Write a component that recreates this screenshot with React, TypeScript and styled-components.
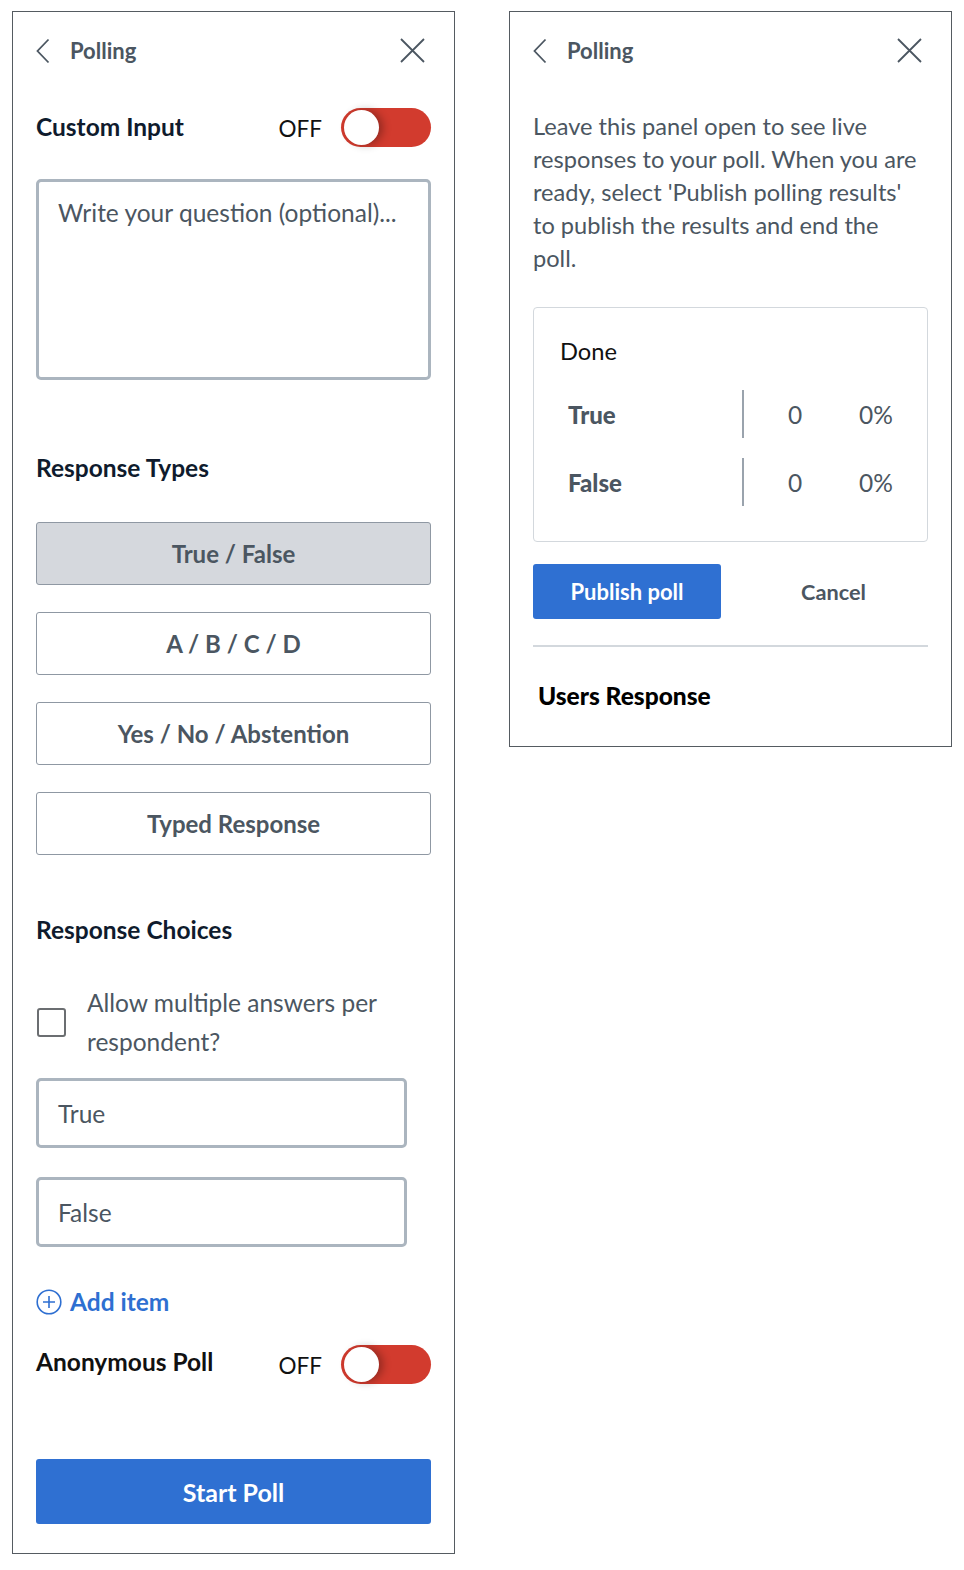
import React from "react";
import styled, { createGlobalStyle } from "styled-components";

const GlobalStyle = createGlobalStyle`
  * { box-sizing: border-box; }
  body {
    margin: 0;
    background: #fff;
    font-family: "Lato", "Liberation Sans", sans-serif;
  }
`;

const Page = styled.div`
  display: flex;
  align-items: flex-start;
  gap: 54px;
  padding: 11px 0 0 12px;
`;

const Panel = styled.div<{ $pad?: number }>`
  width: 443px;
  border: 1.5px solid #555b61;
  padding: 0 23px ${(p) => p.$pad ?? 0}px 23px;
  display: flex;
  flex-direction: column;
`;

const Header = styled.div`
  height: 77px;
  display: flex;
  align-items: center;
`;

const Title = styled.span`
  margin-left: 20px;
  font-size: 22px;
  font-weight: 700;
  color: #4b5661;
  flex: 1;
`;

const IconButton = styled.span`
  display: flex;
  align-items: center;
  justify-content: center;
`;

const ToggleRow = styled.div<{ $mt: number }>`
  margin-top: ${(p) => p.$mt}px;
  display: flex;
  align-items: center;
  height: 39px;
`;

const RowLabel = styled.span<{ $dark?: boolean }>`
  flex: 1;
  font-size: 24.5px;
  font-weight: 700;
  color: ${(p) => (p.$dark ? "#111" : "#0f1b2d")};
  margin-top: ${(p) => (p.$dark ? "-6px" : "-2px")};
`;

const OffText = styled.span`
  font-size: 22.5px;
  color: #111;
  margin-right: 19px;
  margin-top: 2px;
`;

const Switch = styled.span`
  width: 90px;
  height: 39px;
  border-radius: 20px;
  background: #d23b2e;
  position: relative;
  &::after {
    content: "";
    position: absolute;
    left: 3px;
    top: 2px;
    width: 35px;
    height: 35px;
    border-radius: 50%;
    background: #fff;
    box-shadow: 4px 0 8px rgba(0, 0, 0, 0.3);
  }
`;

const TextArea = styled.div`
  margin-top: 32px;
  height: 201px;
  border: 3px solid #abb5bf;
  border-radius: 5px;
  padding: 16px 19px;
  font-size: 24.5px;
  color: #4b5661;
`;

const SectionTitle = styled.div<{ $mt: number }>`
  margin-top: ${(p) => p.$mt}px;
  font-size: 24.5px;
  line-height: 30px;
  font-weight: 700;
  color: #0f1b2d;
`;

const TypeList = styled.div`
  margin-top: 39px;
  display: flex;
  flex-direction: column;
  gap: 27px;
`;

const TypeButton = styled.div<{ $active?: boolean }>`
  height: 63px;
  border: 1.5px solid #8f98a3;
  border-radius: 3px;
  background: ${(p) => (p.$active ? "#d5d8dd" : "#fff")};
  display: flex;
  align-items: center;
  justify-content: center;
  font-size: 24px;
  font-weight: 700;
  color: #4b5661;
`;

const CheckRow = styled.div`
  margin-top: 38px;
  display: flex;
  align-items: center;
  gap: 21px;
`;

const CheckBox = styled.span`
  width: 29px;
  height: 29px;
  flex-shrink: 0;
  border: 2.5px solid #6b6e71;
  border-radius: 3px;
  margin-left: 1px;
`;

const CheckText = styled.span`
  font-size: 24.5px;
  line-height: 39px;
  color: #4b5661;
`;

const ChoiceInput = styled.div<{ $mt: number }>`
  margin-top: ${(p) => p.$mt}px;
  width: 371px;
  height: 70px;
  border: 3px solid #abb5bf;
  border-radius: 5px;
  padding: 0 19px;
  display: flex;
  align-items: center;
  font-size: 24.5px;
  color: #4b5661;
`;

const AddItem = styled.div`
  margin-top: 40px;
  display: flex;
  align-items: center;
  gap: 8px;
  font-size: 24.5px;
  line-height: 30px;
  font-weight: 700;
  color: #2e6fd1;
`;

const PrimaryButton = styled.div<{ $w?: number; $h: number; $size: number }>`
  width: ${(p) => (p.$w ? `${p.$w}px` : "100%")};
  height: ${(p) => p.$h}px;
  background: #2f70d2;
  border-radius: 3px;
  display: flex;
  align-items: center;
  justify-content: center;
  color: #fff;
  font-size: ${(p) => p.$size}px;
  font-weight: 700;
`;

const StartWrap = styled.div`
  margin-top: 75px;
  margin-bottom: 29px;
`;

const Intro = styled.p`
  margin: 21px 0 0;
  font-size: 23.6px;
  line-height: 33px;
  color: #4b5661;
  white-space: nowrap;
`;

const ResultCard = styled.div`
  margin-top: 32px;
  height: 235px;
  border: 1.5px solid #d3d8dd;
  border-radius: 4px;
  padding: 28px 0 0 26px;
`;

const CardTitle = styled.div`
  font-size: 23.7px;
  line-height: 30px;
  color: #111;
`;

const ResultRows = styled.div`
  margin-top: 24px;
  display: flex;
  flex-direction: column;
  gap: 20px;
  padding-left: 8px;
`;

const ResultRow = styled.div`
  display: grid;
  grid-template-columns: 174px 1px 45px 71px auto;
  align-items: center;
  height: 48px;
`;

const ResultLabel = styled.span`
  font-size: 24px;
  font-weight: 900;
  color: #4b5661;
`;

const VLine = styled.span`
  width: 1.5px;
  height: 48px;
  background: #9aa3ad;
`;

const ResultValue = styled.span<{ $col: number }>`
  font-size: 24.5px;
  color: #4b5661;
  grid-column: ${(p) => p.$col};
`;

const ActionRow = styled.div`
  margin-top: 22px;
  display: flex;
  align-items: center;
`;

const TextButton = styled.span`
  flex: 1;
  text-align: center;
  font-size: 21.7px;
  font-weight: 700;
  color: #4b5661;
  margin-left: 18px;
`;

const Divider = styled.div`
  margin-top: 26px;
  height: 1.5px;
  background: #d3d8dd;
`;

const UsersTitle = styled.div`
  margin: 34px 0 0 5px;
  font-size: 24.5px;
  line-height: 30px;
  font-weight: 900;
  color: #000;
`;

const Chevron = () => (
  <svg width="14" height="26" viewBox="0 0 14 26" fill="none">
    <path d="M12.5 1.5L1.5 13l11 11.5" stroke="#4b5661" strokeWidth="1.8" />
  </svg>
);

const CloseIcon = () => (
  <svg width="25" height="25" viewBox="0 0 25 25" fill="none">
    <path d="M1 1l23 23M24 1L1 24" stroke="#4b5661" strokeWidth="1.8" />
  </svg>
);

const PlusCircle = () => (
  <svg width="26" height="26" viewBox="0 0 26 26" fill="none">
    <circle cx="13" cy="13" r="11.8" stroke="#2e6fd1" strokeWidth="1.6" />
    <path d="M13 7v12M7 13h12" stroke="#2e6fd1" strokeWidth="1.6" />
  </svg>
);

const PanelHeader = () => (
  <Header>
    <IconButton>
      <Chevron />
    </IconButton>
    <Title>Polling</Title>
    <IconButton style={{ marginRight: 6 }}>
      <CloseIcon />
    </IconButton>
  </Header>
);

const responseTypes = ["True / False", "A / B / C / D", "Yes / No / Abstention", "Typed Response"];

const results = [
  { label: "True", count: 0, pct: "0%" },
  { label: "False", count: 0, pct: "0%" },
];

const introLines = [
  "Leave this panel open to see live",
  "responses to your poll. When you are",
  "ready, select 'Publish polling results'",
  "to publish the results and end the",
  "poll.",
];

export default function App() {
  return (
    <>
      <GlobalStyle />
      <Page>
        <Panel>
          <PanelHeader />
          <ToggleRow $mt={19}>
            <RowLabel>Custom Input</RowLabel>
            <OffText>OFF</OffText>
            <Switch />
          </ToggleRow>
          <TextArea>Write your question (optional)...</TextArea>

          <SectionTitle $mt={73}>Response Types</SectionTitle>
          <TypeList>
            {responseTypes.map((t, i) => (
              <TypeButton key={t} $active={i === 0}>
                {t}
              </TypeButton>
            ))}
          </TypeList>

          <SectionTitle $mt={60}>Response Choices</SectionTitle>
          <CheckRow>
            <CheckBox />
            <CheckText>
              Allow multiple answers per
              <br />
              respondent?
            </CheckText>
          </CheckRow>
          <ChoiceInput $mt={17}>True</ChoiceInput>
          <ChoiceInput $mt={29}>False</ChoiceInput>

          <AddItem>
            <PlusCircle />
            Add item
          </AddItem>

          <ToggleRow $mt={28}>
            <RowLabel $dark>Anonymous Poll</RowLabel>
            <OffText>OFF</OffText>
            <Switch />
          </ToggleRow>

          <StartWrap>
            <PrimaryButton $h={65} $size={25}>
              Start Poll
            </PrimaryButton>
          </StartWrap>
        </Panel>

        <Panel $pad={35}>
          <PanelHeader />
          <Intro>
            {introLines.map((line, i) => (
              <React.Fragment key={i}>
                {line}
                {i < introLines.length - 1 && <br />}
              </React.Fragment>
            ))}
          </Intro>
          <ResultCard>
            <CardTitle>Done</CardTitle>
            <ResultRows>
              {results.map((r) => (
                <ResultRow key={r.label}>
                  <ResultLabel>{r.label}</ResultLabel>
                  <VLine />
                  <ResultValue $col={4}>{r.count}</ResultValue>
                  <ResultValue $col={5}>{r.pct}</ResultValue>
                </ResultRow>
              ))}
            </ResultRows>
          </ResultCard>
          <ActionRow>
            <PrimaryButton $w={188} $h={55} $size={22}>
              Publish poll
            </PrimaryButton>
            <TextButton>Cancel</TextButton>
          </ActionRow>
          <Divider />
          <UsersTitle>Users Response</UsersTitle>
        </Panel>
      </Page>
    </>
  );
}
